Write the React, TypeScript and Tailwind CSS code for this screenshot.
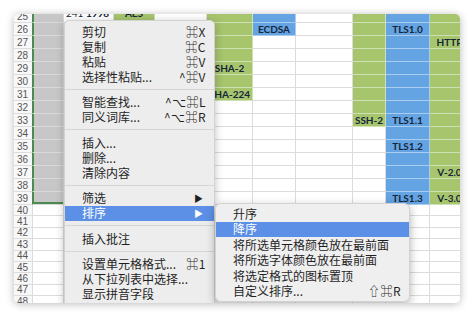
import React from 'react';

type Fill = 'w' | 'g' | 'b' | 's';
type Cell = { fill: Fill; text?: React.ReactNode };

const COLS = [19, 31, 50, 41, 52, 46, 43, 57, 33, 44, 40];
const ROWS = Array.from({ length: 24 }, (_, i) => 25 + i);

const fillClass: Record<Fill, string> = {
  w: 'bg-white border-[#dcdcdc]',
  g: 'bg-[#a6c56d] border-[#cfe0b4]',
  b: 'bg-[#64a4e3] border-[#a9ccef]',
  s: 'bg-[#c7c7c7] border-[#dadada]',
};

const texts: Record<string, string> = {
  '26-6': 'ECDSA',
  '26-9': 'TLS1.0',
  '27-10': 'HTTP',
  '29-5': 'SHA-2',
  '31-5': 'SHA-224',
  '33-8': 'SSH-2',
  '33-9': 'TLS1.1',
  '35-9': 'TLS1.2',
  '37-10': 'V-2.0',
  '39-9': 'TLS1.3',
  '39-10': 'V-3.0',
  '25-3': 'AES',
};

function cellAt(row: number, col: number): Cell {
  let fill: Fill = 'w';
  if (col === 1 && row <= 39) fill = 's';
  if (col === 3 && row === 25) fill = 'g';
  if (col === 5 && row <= 31) fill = 'g';
  if (col === 6 && row <= 26) fill = 'b';
  if (col === 8 && row <= 33) fill = 'g';
  if (col === 9 && row <= 39) fill = 'b';
  if (col === 10 && row <= 39) fill = 'g';
  let text: React.ReactNode = texts[`${row}-${col}`];
  if (row === 25 && col === 2) {
    text = (
      <span className="w-full pl-[2px] text-left">
        <span className="font-normal">241 </span>1998
      </span>
    );
  }
  return { fill, text };
}

type Item = { label: string; sc?: string; arrow?: boolean; active?: boolean } | 'sep';

const mainItems: Item[] = [
  { label: '剪切', sc: '⌘X' },
  { label: '复制', sc: '⌘C' },
  { label: '粘贴', sc: '⌘V' },
  { label: '选择性粘贴...', sc: '^⌘V' },
  'sep',
  { label: '智能查找...', sc: '^⌥⌘L' },
  { label: '同义词库...', sc: '^⌥⌘R' },
  'sep',
  { label: '插入...' },
  { label: '删除...' },
  { label: '清除内容' },
  'sep',
  { label: '筛选', arrow: true },
  { label: '排序', arrow: true, active: true },
  'sep',
  { label: '插入批注' },
  'sep',
  { label: '设置单元格格式...', sc: '⌘1' },
  { label: '从下拉列表中选择...' },
  { label: '显示拼音字段' },
  { label: '定义名称...' },
];

const subItems: Item[] = [
  { label: '升序' },
  { label: '降序', active: true },
  { label: '将所选单元格颜色放在最前面' },
  { label: '将所选字体颜色放在最前面' },
  { label: '将选定格式的图标置顶' },
  { label: '自定义排序...', sc: '⇧⌘R' },
];

const menuFont = { fontFamily: '"Noto Sans CJK SC", "DejaVu Sans", sans-serif' };

function MenuRows({ items, h }: { items: Item[]; h: string }) {
  return (
    <>
      {items.map((item, i) =>
        item === 'sep' ? (
          <div key={i} className="flex h-[10.5px] items-center">
            <div className="h-px w-full bg-[#d6d6d6]" />
          </div>
        ) : (
          <div
            key={i}
            className={`flex ${h} items-center justify-between pl-[17px] pr-[8px] text-[12px] leading-none ${
              item.active ? 'bg-[#5c8fe6] text-white' : 'text-[#1f1f1f]'
            }`}
          >
            <span>{item.label}</span>
            {item.sc && <span className="tracking-[0.5px]">{item.sc}</span>}
            {item.arrow && <span className="pr-[3px] text-[9px]">▶</span>}
          </div>
        )
      )}
    </>
  );
}

export default function App() {
  return (
    <div className="h-[320px] w-[474px] bg-white pl-[14px] pt-[14px]">
      <div className="relative h-[289px] w-[446px] overflow-hidden rounded-[5px] bg-white shadow-[0_1px_8px_rgba(0,0,0,0.28)]">
        {/* Sheet */}
        <div className="-mt-[4px]" style={{ fontFamily: 'Lato, "Liberation Sans", sans-serif' }}>
          {ROWS.map((row) => (
            <div key={row} className={`flex ${row <= 39 ? 'h-[13px]' : 'h-[11.4px]'}`}>
              <div
                className={`flex shrink-0 items-center border-b border-r border-[#dcdcdc] bg-[#f8f8f8] pl-[3px] text-[10px] text-[#555] ${
                  row <= 39 ? 'border-r-[#4b8b52]' : ''
                }`}
                style={{ width: COLS[0], fontFamily: '"Liberation Sans", sans-serif' }}
              >
                {row}
              </div>
              {COLS.slice(1).map((w, ci) => {
                const col = ci + 1;
                const c = cellAt(row, col);
                const sel = col === 1 && row <= 39;
                return (
                  <div
                    key={col}
                    className={`flex shrink-0 items-center justify-center overflow-visible whitespace-nowrap border-b border-r text-[10px] font-bold text-[#16263a] ${fillClass[c.fill]} ${
                      sel ? (row === 39 ? 'shadow-[inset_1px_-2px_0_#4b8b52]' : 'shadow-[inset_1px_0_0_#4b8b52]') : ''
                    }`}
                    style={{ width: w }}
                  >
                    {c.text && (
                      <span className={`flex w-full justify-center ${row === 25 ? 'relative -top-[3px]' : ''}`}>
                        {c.text}
                      </span>
                    )}
                  </div>
                );
              })}
            </div>
          ))}
        </div>

        {/* Context menu */}
        <div
          className="absolute left-[50px] top-[6px] w-[151px] rounded-[5px] border border-[#d2d2d2] bg-[#ededed] pt-[3px] shadow-[0_2px_8px_rgba(0,0,0,0.25)]"
          style={menuFont}
        >
          <MenuRows items={mainItems} h="h-[15px]" />
        </div>

        {/* Sort submenu */}
        <div
          className="absolute left-[201px] top-[189px] h-[99px] w-[195px] rounded-[6px] border border-[#d2d2d2] bg-[#efefef] pt-[2px] shadow-[0_3px_10px_rgba(0,0,0,0.3)]"
          style={menuFont}
        >
          <MenuRows items={subItems} h="h-[15.5px]" />
        </div>
      </div>
    </div>
  );
}
